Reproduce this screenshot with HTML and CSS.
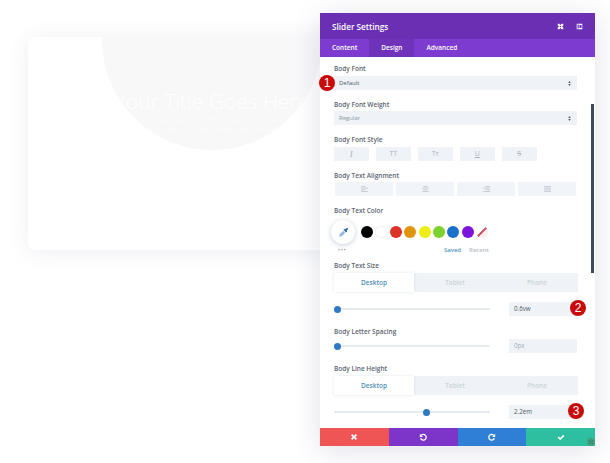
FILE: index.html
```html
<!DOCTYPE html>
<html lang="en">
<head>
<meta charset="utf-8">
<title>Slider Settings</title>
<link rel="stylesheet" href="styles.css">
</head>
<body>
<div class="card">
  <div class="blob"></div>
  <div class="hero">
    <div class="hero-title">Your Title Goes Here</div>
    <div class="hero-line">Your content goes here. Edit or remove this text inline or in the module</div>
    <div class="hero-line">Content settings. You can also style every aspect of this content</div>
  </div>
</div>

<section class="panel">
  <header class="head">
    <span class="head-title">Slider Settings</span>
    <span class="head-icons">
      <svg class="hicon" viewBox="0 0 10 10"><path d="M1 1h2.400L5 3l1.600-2H9v2.400L7 5l2 1.600V9H6.600L5 7 3.400 9H1V6.600L3 5 1 3.400z" fill="#fff"/><circle cx="5" cy="5" r="1" fill="#6a2fb2"/></svg>
      <svg class="hicon" viewBox="0 0 10 10"><path d="M1 1h8v8H1zM2.200 2.200v5.600h1.800V2.200zM5 3v4h3V3z" fill="#fff" fill-rule="evenodd"/></svg>
    </span>
  </header>
  <nav class="tabs">
    <span class="tab">Content</span>
    <span class="tab tab-on">Design</span>
    <span class="tab">Advanced</span>
  </nav>
  <div class="body">
    <div class="scrollbar"></div>
    <div class="field f-font">
      <div class="label">Body Font</div>
      <div class="select dark s-font"><span>Default</span><svg class="updown" viewBox="0 0 6 10"><path d="M3 0l2.500 4h-5zM3 10l2.500-4h-5z"/></svg></div>
      <span class="badge b1">1</span>
    </div>
    <div class="field f-weight">
      <div class="label">Body Font Weight</div>
      <div class="select"><span>Regular</span><svg class="updown" viewBox="0 0 6 10"><path d="M3 0l2.500 4h-5zM3 10l2.500-4h-5z"/></svg></div>
    </div>
    <div class="field f-style">
      <div class="label">Body Font Style</div>
      <div class="styles">
        <span class="sbtn it">I</span><span class="sbtn">TT</span><span class="sbtn">Tт</span><span class="sbtn un">U</span><span class="sbtn st">S</span>
      </div>
    </div>
    <div class="field f-align">
      <div class="label">Body Text Alignment</div>
      <div class="aligns">
        <span class="abtn"><svg viewBox="0 0 8 7"><path d="M0 .5h5M0 2.500h8M0 4.500h5M0 6.500h8"/></svg></span>
        <span class="abtn"><svg viewBox="0 0 8 7"><path d="M1.500 .5h5M0 2.500h8M1.500 4.500h5M0 6.500h8"/></svg></span>
        <span class="abtn"><svg viewBox="0 0 8 7"><path d="M3 .5h5M0 2.500h8M3 4.500h5M0 6.500h8"/></svg></span>
        <span class="abtn"><svg viewBox="0 0 8 7"><path d="M0 .5h8M0 2.500h8M0 4.500h8M0 6.500h8"/></svg></span>
      </div>
    </div>
    <div class="field f-color">
      <div class="label">Body Text Color</div>
      <div class="colors">
        <span class="picker"><svg viewBox="0 0 12 12"><path d="M1.500 10.500l.5-2.500 4-4 2 2-4 4z" fill="#8fb4e8"/><path d="M6 3l3 3 1-1-.8-.8 1.300-1.300a1.100 1.100 0 0 0-1.600-1.600L7.600 2.600 6.800 2.200z" fill="#2b5fb0"/></svg></span>
        <span class="sw c1"></span><span class="sw c2"></span><span class="sw c3"></span><span class="sw c4"></span><span class="sw c5"></span><span class="sw c6"></span><span class="sw c7"></span><span class="sw c8"></span><span class="sw c9"></span>
      </div>
      <div class="color-foot">
        <span class="dots">•••</span>
        <span class="saved">Saved</span>
        <span class="recent">Recent</span>
      </div>
    </div>
    <div class="field f-size">
      <div class="label">Body Text Size</div>
      <div class="devices"><span class="dev dev-on">Desktop</span><span class="dev">Tablet</span><span class="dev">Phone</span></div>
      <div class="slider-row r-gap">
        <div class="track"><span class="thumb t0"></span></div>
        <div class="num dark">0.6vw</div>
      </div>
      <span class="badge b2">2</span>
    </div>
    <div class="field f-spacing">
      <div class="label">Body Letter Spacing</div>
      <div class="slider-row r-spacing">
        <div class="track"><span class="thumb t0"></span></div>
        <div class="num">0px</div>
      </div>
    </div>
    <div class="field f-line">
      <div class="label">Body Line Height</div>
      <div class="devices"><span class="dev dev-on">Desktop</span><span class="dev">Tablet</span><span class="dev">Phone</span></div>
      <div class="slider-row r-gap">
        <div class="track"><span class="thumb t1"></span></div>
        <div class="num dark">2.2em</div>
      </div>
      <span class="badge b3">3</span>
    </div>
  </div>
  <footer class="foot">
    <span class="fbtn red"><svg viewBox="0 0 10 10"><path d="M2 2l6 6M8 2l-6 6" stroke="#fff" stroke-width="2.200" fill="none"/></svg></span>
    <span class="fbtn purple"><svg viewBox="0 0 10 10"><path d="M2.500 3.200A3.600 3.600 0 1 1 2 6.500" stroke="#fff" stroke-width="1.600" fill="none"/><path d="M1 1v4h4z" fill="#fff"/></svg></span>
    <span class="fbtn blue"><svg viewBox="0 0 10 10"><path d="M7.500 3.200A3.600 3.600 0 1 0 8 6.500" stroke="#fff" stroke-width="1.600" fill="none"/><path d="M9 1v4H5z" fill="#fff"/></svg></span>
    <span class="fbtn green"><svg viewBox="0 0 10 10"><path d="M1.500 5l2.500 2.500 4.500-4.500" stroke="#fff" stroke-width="2" fill="none"/></svg><svg class="grip" viewBox="0 0 8 8"><circle cx="4" cy="4" r="4" fill="#3f9f7d"/><path d="M2 6l4-4M2 3l1-1M5 6l1-1" stroke="#2c7a60" stroke-width=".8"/></svg></span>
  </footer>
</section>
</body>
</html>
```

FILE: styles.css
```css
* { box-sizing: border-box; }
html, body { margin: 0; padding: 0; }
body {
  width: 610px;
  height: 463px;
  overflow: hidden;
  position: relative;
  background: #fff;
  font-family: "Open Sans", "Liberation Sans", sans-serif;
  color: #4c5866;
}

/* canvas module behind the panel */
.card {
  position: absolute;
  left: 28px;
  top: 37px;
  width: 320px;
  height: 213px;
  border-radius: 8px;
  background: #fff;
  overflow: hidden;
  box-shadow: 0 2px 22px rgba(60, 70, 100, .09);
}
.blob {
  position: absolute;
  left: 74px;
  top: -107px;
  width: 220px;
  height: 220px;
  border-radius: 50%;
  background: #f8f8f9;
}
.hero {
  position: absolute;
  left: 64px;
  top: 50px;
  width: 240px;
  text-align: center;
  color: #fff;
}
.hero-title { font-size: 21px; line-height: 28px; font-weight: 300; white-space: nowrap; }
.hero-line { font-size: 5px; line-height: 10px; white-space: nowrap; opacity: .9; }

/* settings panel */
.panel {
  position: absolute;
  left: 320px;
  top: 13px;
  width: 275px;
  height: 433px;
  display: flex;
  flex-direction: column;
  background: #fff;
  box-shadow: 0 4px 26px rgba(60, 70, 120, .16);
}
.head {
  height: 26px;
  flex: none;
  display: flex;
  align-items: center;
  justify-content: space-between;
  padding: 0 12px;
  background: #6a2fb2;
  color: #fff;
}
.head-title { font-size: 8.200px; font-weight: 600; }
.head-icons { display: flex; gap: 12px; }
.hicon { width: 7px; height: 7px; display: block; }
.tabs {
  height: 18px;
  flex: none;
  display: flex;
  background: #7d3bcf;
  color: #fff;
  font-size: 6.500px;
  font-weight: 600;
}
.tab { padding: 0 12px; line-height: 18px; }
.tab-on { background: #6f33bb; }

.body {
  position: relative;
  flex: 1;
  min-height: 0;
  padding: 0 17px 0 14px;
  display: flex;
  flex-direction: column;
}
.scrollbar {
  position: absolute;
  right: 1px;
  top: 47px;
  width: 3px;
  height: 169px;
  background: #3e4a5c;
}
.field { position: relative; }
.label {
  height: 10px;
  font-size: 6.500px;
  font-weight: 600;
  line-height: 12px;
  color: #5b6470;
}
.f-font { margin-top: 6px; }
.f-weight { margin-top: 9px; }
.f-style { margin-top: 9px; }
.f-align { margin-top: 9px; }
.f-color { margin-top: 9px; }
.f-size { margin-top: 5px; }
.f-spacing { margin-top: 10px; }
.f-line { margin-top: 10px; }

.select {
  margin-top: 2px;
  height: 14px;
  width: 243px;
  padding: 0 5px;
  display: flex;
  align-items: center;
  justify-content: space-between;
  background: #eff3f7;
  font-size: 6px;
  color: #8b95a0;
}
.select.dark { color: #4c5866; }
.s-font { margin-top: 3px; }
.updown { width: 3px; height: 5px; fill: #4c5866; margin-right: 1px; }

.styles { margin-top: 3px; display: flex; gap: 7.500px; }
.sbtn {
  width: 34.500px;
  height: 14px;
  background: #eff3f7;
  color: #aab3bd;
  font-size: 7px;
  line-height: 14px;
  text-align: center;
}
.it { font-style: italic; font-family: "Liberation Serif", serif; font-size: 9px; }
.un { text-decoration: underline; }
.st { text-decoration: line-through; }

.aligns { margin-top: 2px; margin-left: 1px; display: flex; gap: 3px; }
.abtn {
  width: 58px;
  height: 14px;
  background: #f1f4f9;
  display: flex;
  align-items: center;
  justify-content: center;
}
.abtn svg { width: 7px; height: 6px; fill: none; stroke: #b4bcc6; stroke-width: .8; }

.colors { margin-top: 4px; height: 26px; display: flex; align-items: center; }
.picker {
  width: 24px;
  height: 24px;
  border-radius: 50%;
  background: #fff;
  box-shadow: 0 1px 5px rgba(60, 90, 140, .3);
  display: flex;
  align-items: center;
  justify-content: center;
  margin-right: 6px;
  margin-left: -3px;
}
.picker svg { width: 11px; height: 11px; }
.sw { width: 12px; height: 12px; border-radius: 50%; margin-right: 2.400px; flex: none; }
.c1 { background: #000; }
.c2 { background: #fff; box-shadow: inset 0 0 1px #c9ced6; }
.c3 { background: #dd3327; }
.c4 { background: #e0940e; }
.c5 { background: #eeee11; }
.c6 { background: #7bd12d; }
.c7 { background: #1a6fc9; }
.c8 { background: #7e13dc; }
.c9 { background: linear-gradient(135deg, #fff 42%, #cf5a6e 44%, #cf5a6e 56%, #fbeef0 58%); }
.color-foot {
  height: 10px;
  display: flex;
  align-items: center;
  font-size: 6px;
  font-weight: 600;
}
.dots { font-size: 5px; letter-spacing: 1px; color: #8b95a0; margin-left: 4px; }
.saved { color: #4f97c0; margin-left: auto; }
.recent { color: #b4bcc6; margin-left: 8px; margin-right: 89px; }

.devices { margin-top: 3px; width: 244px; height: 19px; display: flex; background: #eff3f7; }
.dev {
  flex: 1;
  text-align: center;
  font-size: 6.500px;
  font-weight: 600;
  line-height: 19px;
  color: #ccd3db;
}
.dev-on { background: #fff; color: #4f8fb5; box-shadow: 0 0 3px rgba(90, 110, 140, .18); flex: none; width: 80px; }

.slider-row { display: flex; align-items: center; justify-content: space-between; width: 243px; height: 14px; }
.r-gap { margin-top: 10px; }
.r-spacing { margin-top: 3px; }
.track { position: relative; width: 156px; height: 2px; background: #e6ebf0; }
.thumb {
  position: absolute;
  top: -2.500px;
  width: 7px;
  height: 7px;
  border-radius: 50%;
  background: #2f78c4;
}
.t0 { left: 0; }
.t1 { left: 89px; }
.num {
  width: 68px;
  height: 14px;
  background: #eff3f7;
  padding-left: 5px;
  font-size: 6.200px;
  line-height: 14px;
  color: #a4adb7;
}
.num.dark { color: #4c5866; }

.badge {
  position: absolute;
  width: 16px;
  height: 16px;
  border-radius: 50%;
  background: #c80a0a;
  color: #fff;
  font-family: "Liberation Sans", sans-serif;
  font-size: 12px;
  line-height: 16px;
  text-align: center;
}
.b1 { left: -15px; top: 12px; }
.b2 { left: 236px; top: 40px; }
.b3 { left: 234px; top: 40px; }

.foot { height: 18px; flex: none; display: flex; }
.fbtn {
  position: relative;
  flex: 1;
  display: flex;
  align-items: center;
  justify-content: center;
}
.fbtn > svg:first-child { width: 8px; height: 8px; }
.red { background: #ef5555; }
.purple { background: #7d35c9; }
.blue { background: #2f7fd6; }
.green { background: #2dbf9f; }
.fbtn > .grip { position: absolute; right: 0; bottom: 0; width: 8px; height: 8px; }
```
